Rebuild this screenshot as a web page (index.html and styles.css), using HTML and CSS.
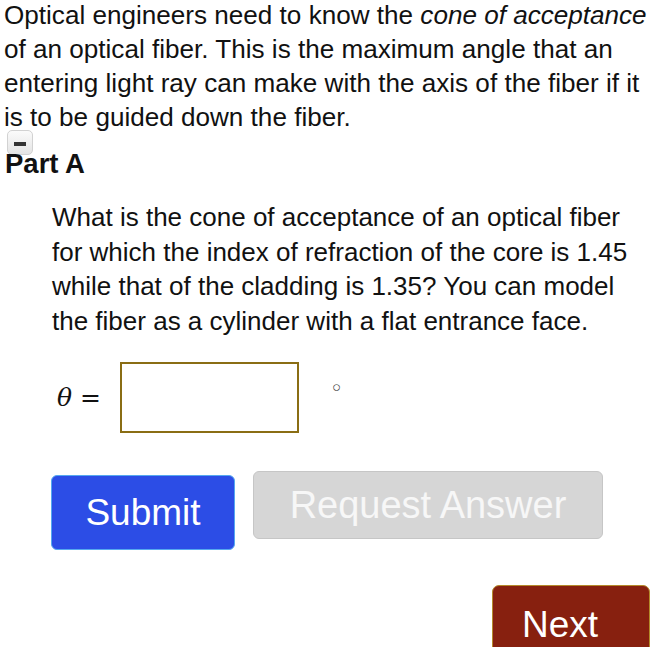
FILE: index.html
```html
<!DOCTYPE html>
<html lang="en">
<head>
    <meta charset="UTF-8">
    <title>Part A</title>
    <link rel="stylesheet" href="styles.css">
</head>
<body>
    <div class="page">
        <p class="intro">
            Optical engineers need to know the <em>cone of acceptance</em>
            of an optical fiber. This is the maximum angle that an
            entering light ray can make with the axis of the fiber if it
            is to be guided down the fiber.
        </p>

        <!-- Collapsible part header -->
        <div class="part-head">
            <span class="toggle"><span class="toggle-bar"></span></span>
            <h2>Part A</h2>
        </div>

        <div class="part-body">
            <p class="question">
                What is the cone of acceptance of an optical fiber
                for which the index of refraction of the core is 1.45
                while that of the cladding is 1.35? You can model
                the fiber as a cylinder with a flat entrance face.
            </p>

            <div class="answer-row">
                <span class="answer-label"><i>&theta;</i> =</span>
                <input type="text" class="answer-input">
                <span class="unit">&#9675;</span>
            </div>

            <div class="actions">
                <button class="btn btn-submit">Submit</button>
                <button class="btn btn-request">Request Answer</button>
            </div>
        </div>

        <div class="footer">
            <button class="btn btn-next">Next</button>
        </div>
    </div>
</body>
</html>
```

FILE: styles.css
```css
/* Global */
body {
    margin: 0;
    background: #ffffff;
    font-family: 'Liberation Sans', Arial, sans-serif;
    color: #111;
    overflow: hidden;
}

.page {
    padding: 0 0 0 4px;
}

/* Intro text */
.intro {
    margin: -2px 0 0 0;
    font-size: 26.1px;
    line-height: 34px;
}

/* Part header */
.part-head {
    margin-top: -4px;
}

.toggle {
    position: relative;
    display: flex;
    justify-content: center;
    width: 26px;
    height: 25px;
    margin-left: 3px;
    padding-top: 11px;
    border: 1px solid #d2d2d2;
    border-radius: 5px;
    background: linear-gradient(#fbfbfb, #e4e4e4);
    box-sizing: border-box;
}

.toggle-bar {
    width: 12px;
    height: 4px;
    background: #333;
}

h2 {
    position: relative;
    margin: -7px 0 0 1px;
    font-size: 27.5px;
    line-height: 31px;
    font-weight: bold;
}

/* Question */
.part-body {
    padding-left: 48px;
}

.question {
    margin: 21px 0 0 0;
    font-size: 26px;
    line-height: 34.5px;
}

.answer-row {
    display: flex;
    align-items: center;
    margin-top: 24px;
}

.answer-label {
    width: 68px;
    padding-left: 5px;
    font-family: 'DejaVu Serif', serif;
    font-size: 25px;
    box-sizing: border-box;
}

.answer-input {
    width: 179px;
    height: 71px;
    border: 2px solid #8a6d14;
    box-sizing: border-box;
    outline: none;
}

.unit {
    align-self: flex-start;
    margin: 16px 0 0 33px;
    font-size: 15px;
    color: #444;
}

/* Buttons */
.actions {
    display: flex;
    align-items: flex-start;
    gap: 18px;
    margin-top: 38px;
}

.btn {
    padding: 0;
    font-family: 'Liberation Sans', Arial, sans-serif;
    color: #fff;
    cursor: pointer;
}

.btn-submit {
    width: 184px;
    height: 75px;
    margin-top: 4px;
    margin-left: -1px;
    font-size: 37px;
    background: #2c4de6;
    border: 1px solid #55a8f0;
    border-radius: 6px;
}

.btn-request {
    width: 350px;
    height: 68px;
    font-size: 38px;
    background: #d6d6d6;
    color: #f7f7f7;
    border: 1px solid #c6c6c6;
    border-radius: 6px;
}

.footer {
    display: flex;
    justify-content: flex-end;
    margin-top: 35px;
    padding-right: 4px;
}

.btn-next {
    width: 158px;
    height: 80px;
    padding-right: 22px;
    font-size: 37px;
    background: #87200f;
    border: 1px solid #b48a2a;
    border-radius: 7px;
}
```
